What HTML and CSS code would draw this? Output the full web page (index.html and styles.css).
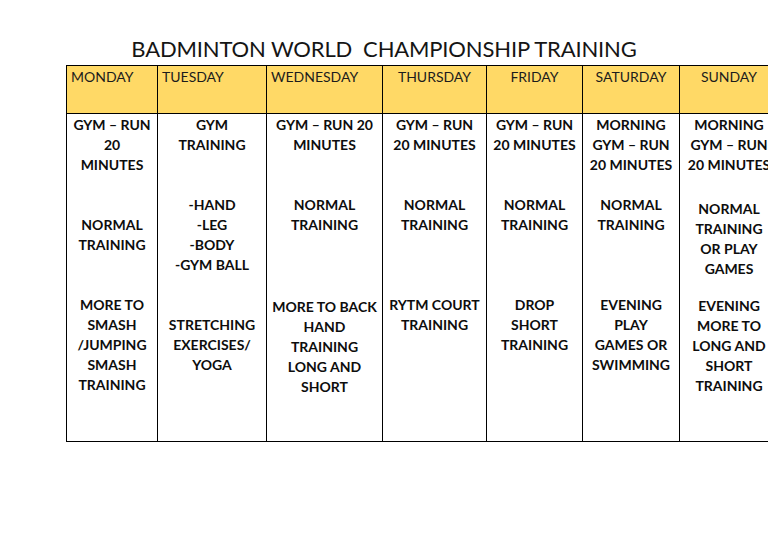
FILE: index.html
```html
<!DOCTYPE html>
<html>
<head>
<meta charset="utf-8">
<title>Badminton World Championship Training</title>
<link rel="stylesheet" href="styles.css">
</head>
<body>
<div class="page">
  <h1 class="title">BADMINTON WORLD&nbsp; CHAMPIONSHIP TRAINING</h1>
  <table class="plan">
    <colgroup>
      <col class="c-mon"><col class="c-tue"><col class="c-wed"><col class="c-thu"><col class="c-fri"><col class="c-sat"><col class="c-sun">
    </colgroup>
    <thead>
      <tr>
        <th class="left">MONDAY</th>
        <th class="left">TUESDAY</th>
        <th class="left">WEDNESDAY</th>
        <th>THURSDAY</th>
        <th>FRIDAY</th>
        <th>SATURDAY</th>
        <th>SUNDAY</th>
      </tr>
    </thead>
    <tbody>
      <tr>
        <td>
          <div class="blk b1">GYM – RUN<br>20<br>MINUTES</div>
          <div class="blk b2 down20">NORMAL<br>TRAINING</div>
          <div class="blk b3">MORE TO<br>SMASH<br>/JUMPING<br>SMASH<br>TRAINING</div>
        </td>
        <td>
          <div class="blk b1">GYM<br>TRAINING</div>
          <div class="blk b2">-HAND<br>-LEG<br>-BODY<br>-GYM BALL</div>
          <div class="blk b3 down20">STRETCHING<br>EXERCISES/<br>YOGA</div>
        </td>
        <td>
          <div class="blk b1">GYM – RUN 20<br>MINUTES</div>
          <div class="blk b2">NORMAL<br>TRAINING</div>
          <div class="blk b3 down2">MORE TO BACK<br>HAND<br>TRAINING<br>LONG AND<br>SHORT</div>
        </td>
        <td>
          <div class="blk b1">GYM – RUN<br>20 MINUTES</div>
          <div class="blk b2">NORMAL<br>TRAINING</div>
          <div class="blk b3">RYTM COURT<br>TRAINING</div>
        </td>
        <td>
          <div class="blk b1">GYM – RUN<br>20 MINUTES</div>
          <div class="blk b2">NORMAL<br>TRAINING</div>
          <div class="blk b3">DROP<br>SHORT<br>TRAINING</div>
        </td>
        <td>
          <div class="blk b1">MORNING<br>GYM – RUN<br>20 MINUTES</div>
          <div class="blk b2">NORMAL<br>TRAINING</div>
          <div class="blk b3">EVENING<br>PLAY<br>GAMES OR<br>SWIMMING</div>
        </td>
        <td>
          <div class="blk b1">MORNING<br>GYM – RUN<br>20 MINUTES</div>
          <div class="blk b2 down4">NORMAL<br>TRAINING<br>OR PLAY<br>GAMES</div>
          <div class="blk b3 down1">EVENING<br>MORE TO<br>LONG AND<br>SHORT<br>TRAINING</div>
        </td>
      </tr>
    </tbody>
  </table>
</div>
</body>
</html>
```

FILE: styles.css
```css
html, body {
  margin: 0;
  padding: 0;
  background: #ffffff;
  overflow: hidden;
}
body {
  width: 768px;
  height: 543px;
  font-family: "Lato", "Open Sans", "Liberation Sans", sans-serif;
  color: #111111;
}
.page {
  padding-top: 35px;
  width: 768px;
}
.title {
  margin: 0;
  font-weight: 400;
  font-size: 22px;
  line-height: 27px;
  height: 30px;
  text-align: center;
  color: #151515;
  letter-spacing: -0.15px;
}
.plan {
  margin-left: 66px;
  border-collapse: collapse;
  table-layout: fixed;
  width: 712px;
}
.c-mon { width: 91px; }
.c-tue { width: 109px; }
.c-wed { width: 116px; }
.c-thu { width: 104px; }
.c-fri { width: 96px; }
.c-sat { width: 97px; }
.c-sun { width: 99px; }
.plan th, .plan td {
  border: 1px solid #000000;
  padding: 0;
  vertical-align: top;
}
.plan th {
  background: #ffd966;
  height: 46px;
  font-weight: 400;
  font-size: 14px;
  line-height: 20px;
  padding: 1px 4px 0;
  text-align: center;
  color: #1c1c1c;
}
.plan th.left { text-align: left; }
.plan td {
  height: 326px;
  text-align: center;
  font-weight: 700;
  font-size: 14px;
  line-height: 20px;
  padding-top: 1px;
  white-space: nowrap;
  color: #0d0d0d;
}
.blk { overflow: visible; }
.b1 { height: 80px; }
.b2 { height: 100px; box-sizing: border-box; }
.down20 { padding-top: 20px; }
.down2 { padding-top: 2px; }
.down4 { padding-top: 4px; }
.down1 { padding-top: 1px; }
```
